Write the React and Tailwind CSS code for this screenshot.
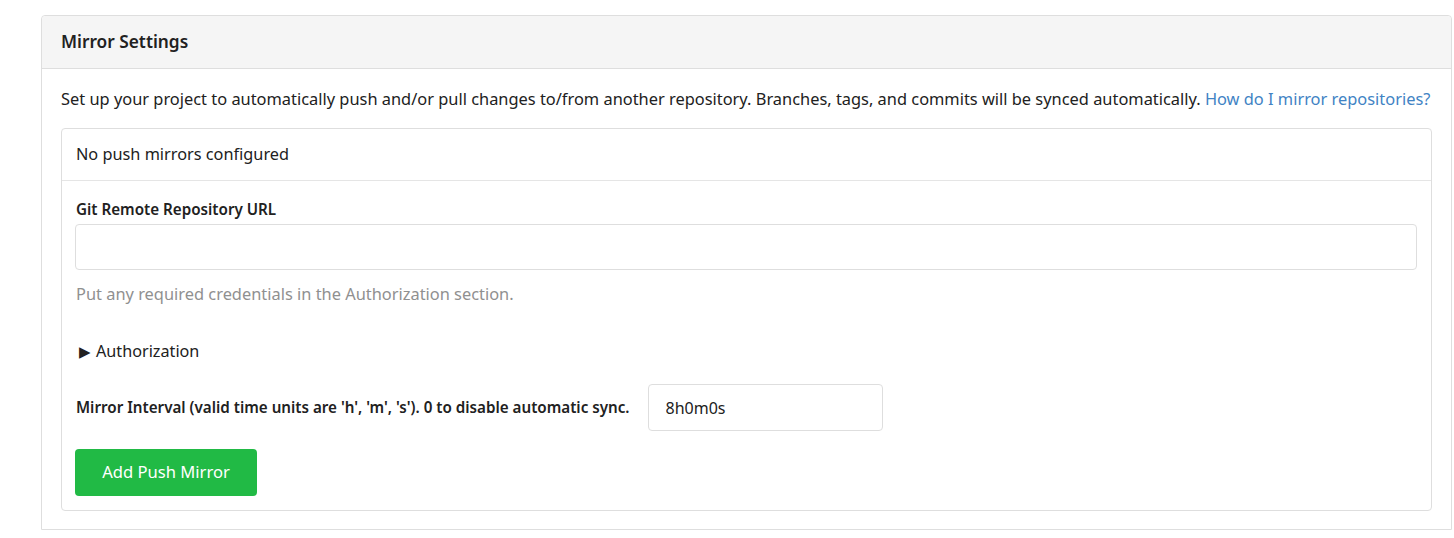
export default function App() {
  const font = { fontFamily: '"Noto Sans", "Open Sans", sans-serif' };
  return (
    <div className="bg-white min-h-[538px] pl-[41px] pr-[2px] pt-[15px] text-[#212121]" style={font}>
      <div className="border border-[#dedede] rounded-t-[4px]">
        <div className="h-[53px] bg-[#f5f5f5] border-b border-[#dedede] flex items-center px-[19px] rounded-t-[4px]">
          <h2 className="text-[17.3px] font-semibold text-[#212121]">Mirror Settings</h2>
        </div>
        <div className="px-[19px] pt-[18px] pb-[18px]">
          <p className="text-[16.4px] leading-[24px] whitespace-nowrap">
            Set up your project to automatically push and/or pull changes to/from another repository. Branches, tags, and commits will be synced automatically.{' '}
            <a className="text-[#4183c4]" href="#">How do I mirror repositories?</a>
          </p>
          <div className="mt-[17px] border border-[#dedede] rounded-[4px]">
            <div className="h-[52px] flex items-center px-[14px] border-b border-[#e5e5e5] text-[16.3px]">
              No push mirrors configured
            </div>
            <div className="pl-[13px] pr-[14px] pt-[18px] pb-[14px]">
              <label className="block pl-[1px] text-[15.2px] font-semibold leading-[20px]">Git Remote Repository URL</label>
              <input className="mt-[5px] block w-full h-[46px] border border-[#dedede] rounded-[4px] px-3 outline-none" />
              <div className="mt-[12px] pl-[1px] text-[16.4px] text-[#909090] leading-[24px]">Put any required credentials in the Authorization section.</div>
              <div className="mt-[33px] flex items-center text-[16.2px] leading-[24px]">
                <span className="text-[15px] mr-[5px] ml-[4px]">▶</span>
                <span>Authorization</span>
              </div>
              <div className="mt-[21px] flex items-center gap-[18px] pl-[1px]">
                <label className="text-[15.2px] font-semibold">Mirror Interval (valid time units are 'h', 'm', 's'). 0 to disable automatic sync.</label>
                <input defaultValue="8h0m0s" className="w-[235px] h-[47px] border border-[#dedede] rounded-[4px] px-[17px] text-[16px] outline-none" style={font} />
              </div>
              <button className="mt-[18px] h-[47px] w-[182px] bg-[#21ba45] text-white text-[16.6px] rounded-[4px]">Add Push Mirror</button>
            </div>
          </div>
        </div>
      </div>
    </div>
  );
}
